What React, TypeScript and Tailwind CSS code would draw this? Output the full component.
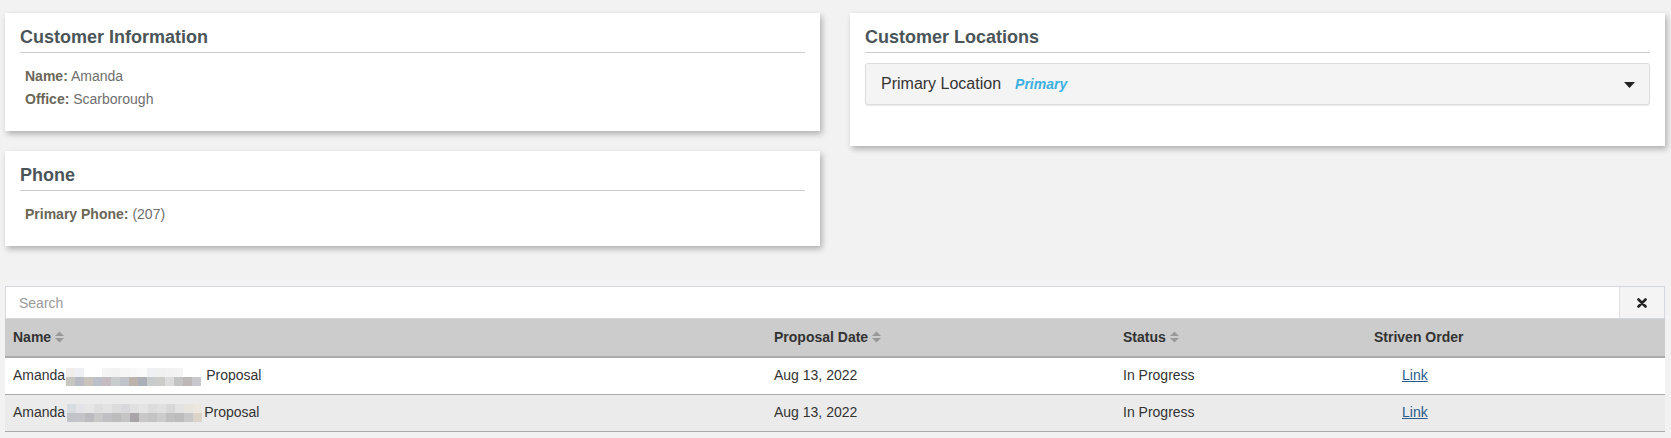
import React from 'react'

const font = { fontFamily: '"Liberation Sans", Arial, sans-serif' }

// pixelated (redacted) blocks in the name column
const mosaicA = {
  top: ['#f0eeea', '#eef0f4', '#ffffff', '#ffffff', '#f4f4f4', '#f2f2f2', '#f6f6f6', '#f8f8f8', '#fafafa', '#eef0f4', '#f0f0f0', '#f2f2f2', '#f4f4f4', '#ffffff', '#ffffff'],
  bottom: ['#c8c6c0', '#b8bac4', '#c8c4bc', '#bcc0c8', '#c4bcc0', '#c8cccc', '#c0c4c8', '#bcb4ac', '#acb0b8', '#c8cccc', '#ccccc8', '#dcdcdc', '#c4c4c4', '#bcb8b8', '#c8c8cc'],
}
const mosaicB = {
  top: ['#d8dce0', '#e4e4e8', '#e6e6e6', '#dedede', '#e2e2e2', '#dcdcdc', '#d8d8dc', '#e0e0e0', '#e4e4e4', '#dcdcdc', '#e0e0e0', '#d8d8d8', '#e2e2e2', '#e8e4de', '#ece8e0'],
  bottom: ['#c0c4c8', '#c4c4c8', '#bcbcc0', '#c8c8c8', '#c0c0c4', '#bcbcbc', '#c4c4c4', '#a8a4a8', '#c8c8c8', '#c4c4c4', '#cccccc', '#c0c0c0', '#bcbcbc', '#c8c8c8', '#dcd4c8'],
}

function Mosaic({ data }: { data: { top: string[]; bottom: string[] } }) {
  return (
    <span className="inline-flex flex-col align-middle">
      <span className="flex">
        {data.top.map((c, i) => (
          <span key={i} className="block w-[9px] h-[9px]" style={{ backgroundColor: c }} />
        ))}
      </span>
      <span className="flex">
        {data.bottom.map((c, i) => (
          <span key={i} className="block w-[9px] h-[9px]" style={{ backgroundColor: c }} />
        ))}
      </span>
    </span>
  )
}

function SortIcon() {
  return (
    <svg width="9" height="12" viewBox="0 0 9 12" className="inline-block ml-[4px] -mt-[2px] align-middle">
      <path d="M0 5 L4.5 0.5 L9 5 Z" fill="#999" />
      <path d="M0 7 L4.5 11.5 L9 7 Z" fill="#999" />
    </svg>
  )
}

function Card({ title, children, className = '' }: { title: string; children: React.ReactNode; className?: string }) {
  return (
    <div className={`bg-white pt-[13px] px-[15px] shadow-[2px_3px_6px_rgba(0,0,0,0.28)] ${className}`}>
      <h3 className="text-[18px] leading-[22px] font-bold text-[#4b5559] pb-[4px] border-b border-[#cccccc]">{title}</h3>
      {children}
    </div>
  )
}

function Field({ label, value }: { label: string; value: string }) {
  return (
    <div className="pl-[5px] text-[14px] leading-[23px] text-[#6e6e6e]">
      <span className="font-bold text-[#6b6656]">{label}:</span> {value}
    </div>
  )
}

const rows = [
  { mosaic: mosaicA, gap: true, date: 'Aug 13, 2022', status: 'In Progress', bg: 'bg-white' },
  { mosaic: mosaicB, gap: false, date: 'Aug 13, 2022', status: 'In Progress', bg: 'bg-[#ebebeb]' },
]

export default function App() {
  return (
    <div className="min-h-[438px] bg-[#f2f2f2] pt-[13px] pl-[5px]" style={font}>
      <div className="flex items-start">
        {/* Left column */}
        <div className="w-[815px] flex flex-col gap-[20px]">
          <Card title="Customer Information" className="h-[118px]">
            <div className="mt-[12px]">
              <Field label="Name" value="Amanda" />
              <Field label="Office" value="Scarborough" />
            </div>
          </Card>
          <Card title="Phone" className="h-[95px]">
            <div className="mt-[12px]">
              <Field label="Primary Phone" value="(207)" />
            </div>
          </Card>
        </div>

        {/* Right column */}
        <Card title="Customer Locations" className="ml-[30px] w-[815px] h-[133px]">
          <div className="mt-[10px] h-[42px] bg-[#f4f4f4] border border-[#dddddd] rounded-[3px] shadow-[0_1px_1px_rgba(0,0,0,0.08)] flex items-center pl-[15px] pr-[14px]">
            <span className="text-[16px] text-[#333333]">Primary Location</span>
            <span className="ml-[14px] text-[14px] italic font-bold text-[#3bb0e0]">Primary</span>
            <svg width="11" height="6" viewBox="0 0 11 6" className="ml-auto mt-[1px]">
              <path d="M0 0 L11 0 L5.5 6 Z" fill="#222" />
            </svg>
          </div>
        </Card>
      </div>

      {/* Proposals table */}
      <div className="mt-[40px] w-[1660px]">
        <div className="flex h-[33px] border border-[#d6d6e0] bg-white">
          <input
            placeholder="Search"
            className="flex-1 h-full pl-[13px] text-[14px] text-[#333] placeholder:text-[#9a9a9a] outline-none bg-white"
            style={font}
          />
          <div className="w-[45px] h-full bg-[#f4f4f4] border-l border-[#e0e0e0] flex items-center justify-center">
            <svg width="10" height="10" viewBox="0 0 10 10">
              <path d="M1.5 1.5 L8.5 8.5 M8.5 1.5 L1.5 8.5" stroke="#222" strokeWidth="2.6" strokeLinecap="round" />
            </svg>
          </div>
        </div>
        <table className="w-full border-collapse text-[14px] text-[#333333]">
          <thead>
            <tr className="bg-[#cccccc] h-[38px] border-b-2 border-[#aaaaaa]">
              <th className="text-left font-bold pl-[8px] w-[761px]">Name<SortIcon /></th>
              <th className="text-left font-bold pl-[8px] w-[349px]">Proposal Date<SortIcon /></th>
              <th className="text-left font-bold pl-[8px] w-[251px]">Status<SortIcon /></th>
              <th className="text-left font-bold pl-[8px]">Striven Order</th>
            </tr>
          </thead>
          <tbody>
            {rows.map((r, i) => (
              <tr key={i} className={`${r.bg} h-[37px] border-b border-[#aaaaaa]`}>
                <td className="pl-[8px]">
                  <span className="inline-flex items-center">
                    Amanda
                    <span className={r.gap ? 'ml-[1px] mr-[5px]' : 'ml-[2px] mr-[2px]'}>
                      <Mosaic data={r.mosaic} />
                    </span>
                    Proposal
                  </span>
                </td>
                <td className="pl-[8px]">{r.date}</td>
                <td className="pl-[8px]">{r.status}</td>
                <td className="pl-[36px]">
                  <a href="#" className="text-[#2a5b8a] underline">Link</a>
                </td>
              </tr>
            ))}
          </tbody>
        </table>
      </div>
    </div>
  )
}
